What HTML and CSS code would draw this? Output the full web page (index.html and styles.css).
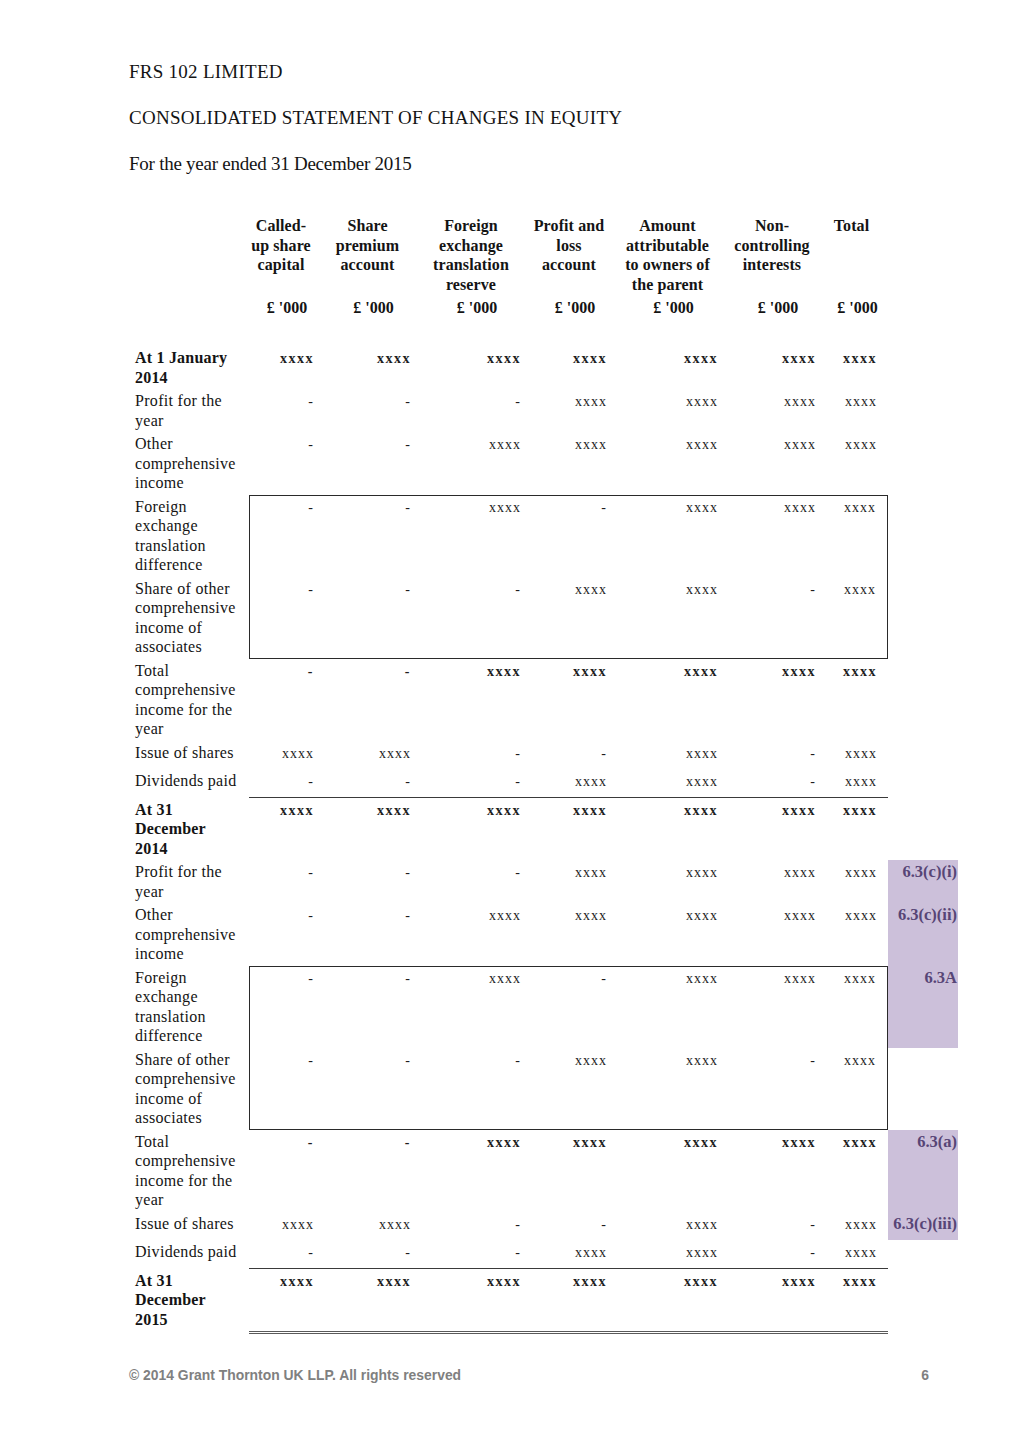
FILE: index.html
```html
<!DOCTYPE html>
<html lang="en">
<head>
<meta charset="utf-8">
<title>Consolidated statement of changes in equity</title>
<link rel="stylesheet" href="styles.css">
</head>
<body>
<div class="page">
  <div class="title t-caps">FRS 102 LIMITED</div>
  <div class="title t-caps">CONSOLIDATED STATEMENT OF CHANGES IN EQUITY</div>
  <div class="title t-mixed">For the year ended 31 December 2015</div>

  <table class="soce">
    <colgroup>
      <col class="c-lbl"><col class="c1"><col class="c2"><col class="c3"><col class="c4"><col class="c5"><col class="c6"><col class="c7"><col class="c-note">
    </colgroup>
    <thead>
      <tr class="hd">
        <th></th>
        <th>Called-up share capital</th>
        <th>Share premium account</th>
        <th>Foreign exchange translation reserve</th>
        <th>Profit and loss account</th>
        <th>Amount attributable to owners of the parent</th>
        <th>Non-controlling interests</th>
        <th>Total</th>
        <th></th>
      </tr>
      <tr class="cur">
        <th></th>
        <th>£ '000</th><th>£ '000</th><th>£ '000</th><th>£ '000</th><th>£ '000</th><th>£ '000</th><th>£ '000</th>
        <th></th>
      </tr>
    </thead>
    <tbody>
      <tr class="strong">
        <td class="lbl">At 1 January 2014</td>
        <td class="n">xxxx</td><td class="n">xxxx</td><td class="n">xxxx</td><td class="n">xxxx</td><td class="n">xxxx</td><td class="n">xxxx</td><td class="n">xxxx</td>
        <td class="note"></td>
      </tr>
      <tr>
        <td class="lbl">Profit for the year</td>
        <td class="n">-</td><td class="n">-</td><td class="n">-</td><td class="n">xxxx</td><td class="n">xxxx</td><td class="n">xxxx</td><td class="n">xxxx</td>
        <td class="note"></td>
      </tr>
      <tr>
        <td class="lbl">Other comprehensive income</td>
        <td class="n">-</td><td class="n">-</td><td class="n">xxxx</td><td class="n">xxxx</td><td class="n">xxxx</td><td class="n">xxxx</td><td class="n">xxxx</td>
        <td class="note"></td>
      </tr>
      <tr class="box-top">
        <td class="lbl">Foreign exchange translation difference</td>
        <td class="n bl">-</td><td class="n">-</td><td class="n">xxxx</td><td class="n">-</td><td class="n">xxxx</td><td class="n">xxxx</td><td class="n br">xxxx</td>
        <td class="note"></td>
      </tr>
      <tr class="box-bottom">
        <td class="lbl">Share of other comprehensive income of associates</td>
        <td class="n bl">-</td><td class="n">-</td><td class="n">-</td><td class="n">xxxx</td><td class="n">xxxx</td><td class="n">-</td><td class="n br">xxxx</td>
        <td class="note"></td>
      </tr>
      <tr class="totals">
        <td class="lbl">Total comprehensive income for the year</td>
        <td class="n">-</td><td class="n">-</td><td class="n">xxxx</td><td class="n">xxxx</td><td class="n">xxxx</td><td class="n">xxxx</td><td class="n">xxxx</td>
        <td class="note"></td>
      </tr>
      <tr class="single">
        <td class="lbl">Issue of shares</td>
        <td class="n">xxxx</td><td class="n">xxxx</td><td class="n">-</td><td class="n">-</td><td class="n">xxxx</td><td class="n">-</td><td class="n">xxxx</td>
        <td class="note"></td>
      </tr>
      <tr class="single rule">
        <td class="lbl">Dividends paid</td>
        <td class="n">-</td><td class="n">-</td><td class="n">-</td><td class="n">xxxx</td><td class="n">xxxx</td><td class="n">-</td><td class="n">xxxx</td>
        <td class="note"></td>
      </tr>
      <tr class="strong">
        <td class="lbl">At 31 December 2014</td>
        <td class="n">xxxx</td><td class="n">xxxx</td><td class="n">xxxx</td><td class="n">xxxx</td><td class="n">xxxx</td><td class="n">xxxx</td><td class="n">xxxx</td>
        <td class="note"></td>
      </tr>

      <tr>
        <td class="lbl">Profit for the year</td>
        <td class="n">-</td><td class="n">-</td><td class="n">-</td><td class="n">xxxx</td><td class="n">xxxx</td><td class="n">xxxx</td><td class="n">xxxx</td>
        <td class="note ref">6.3(c)(i)</td>
      </tr>
      <tr>
        <td class="lbl">Other comprehensive income</td>
        <td class="n">-</td><td class="n">-</td><td class="n">xxxx</td><td class="n">xxxx</td><td class="n">xxxx</td><td class="n">xxxx</td><td class="n">xxxx</td>
        <td class="note ref">6.3(c)(ii)</td>
      </tr>
      <tr class="box-top">
        <td class="lbl">Foreign exchange translation difference</td>
        <td class="n bl">-</td><td class="n">-</td><td class="n">xxxx</td><td class="n">-</td><td class="n">xxxx</td><td class="n">xxxx</td><td class="n br">xxxx</td>
        <td class="note ref">6.3A</td>
      </tr>
      <tr class="box-bottom">
        <td class="lbl">Share of other comprehensive income of associates</td>
        <td class="n bl">-</td><td class="n">-</td><td class="n">-</td><td class="n">xxxx</td><td class="n">xxxx</td><td class="n">-</td><td class="n br">xxxx</td>
        <td class="note"></td>
      </tr>
      <tr class="totals">
        <td class="lbl">Total comprehensive income for the year</td>
        <td class="n">-</td><td class="n">-</td><td class="n">xxxx</td><td class="n">xxxx</td><td class="n">xxxx</td><td class="n">xxxx</td><td class="n">xxxx</td>
        <td class="note ref">6.3(a)</td>
      </tr>
      <tr class="single">
        <td class="lbl">Issue of shares</td>
        <td class="n">xxxx</td><td class="n">xxxx</td><td class="n">-</td><td class="n">-</td><td class="n">xxxx</td><td class="n">-</td><td class="n">xxxx</td>
        <td class="note ref">6.3(c)(iii)</td>
      </tr>
      <tr class="single rule">
        <td class="lbl">Dividends paid</td>
        <td class="n">-</td><td class="n">-</td><td class="n">-</td><td class="n">xxxx</td><td class="n">xxxx</td><td class="n">-</td><td class="n">xxxx</td>
        <td class="note"></td>
      </tr>
      <tr class="strong final">
        <td class="lbl">At 31 December 2015</td>
        <td class="n">xxxx</td><td class="n">xxxx</td><td class="n">xxxx</td><td class="n">xxxx</td><td class="n">xxxx</td><td class="n">xxxx</td><td class="n">xxxx</td>
        <td class="note"></td>
      </tr>
    </tbody>
  </table>

  <footer class="foot">
    <span>© 2014 Grant Thornton UK LLP. All rights reserved</span>
    <span>6</span>
  </footer>
</div>
</body>
</html>
```

FILE: styles.css
```css
html, body {
  margin: 0;
  padding: 0;
  background: #ffffff;
}

body {
  font-family: "Liberation Serif", "Times New Roman", serif;
  color: #141414;
}

.page {
  width: 1024px;
  box-sizing: border-box;
  padding: 49px 0 0 129px;
}

.title {
  font-size: 19px;
  line-height: 46px;
  height: 46px;
  white-space: nowrap;
}

.t-caps { letter-spacing: 0.26px; }
.t-mixed { letter-spacing: -0.25px; }

.soce {
  margin-top: 29px;
  margin-left: 1px;
  border-collapse: separate;
  border-spacing: 0;
  table-layout: fixed;
  width: 828px;
}

.c-lbl { width: 119px; }
.c1 { width: 76px; }
.c2 { width: 97px; }
.c3 { width: 110px; }
.c4 { width: 86px; }
.c5 { width: 111px; }
.c6 { width: 98px; }
.c7 { width: 61px; }
.c-note { width: 70px; }

/* header */
.hd th {
  font-size: 16px;
  line-height: 19.5px;
  font-weight: bold;
  text-align: center;
  vertical-align: top;
  padding: 0 12px 0 0;
  letter-spacing: 0.1px;
}

.cur th {
  font-size: 16px;
  line-height: 19.5px;
  font-weight: bold;
  text-align: center;
  vertical-align: top;
  padding: 4px 0 28.5px 0;
  white-space: nowrap;
}

/* body cells */
.soce td {
  vertical-align: baseline;
  padding: 2px 0 2px 0;
  line-height: 19.5px;
}

.lbl {
  font-size: 16px;
  letter-spacing: 0.3px;
  padding-left: 5px !important;
  padding-right: 8px !important;
}

.n {
  font-size: 14px;
  letter-spacing: 1px;
  text-align: right;
  padding-right: 11px !important;
  color: #1e1e1e;
}

.strong .lbl {
  font-weight: bold;
  letter-spacing: 0.2px;
}

.strong .n,
.totals .n {
  font-weight: bold;
  letter-spacing: 1.5px;
}

.single td {
  padding-bottom: 5.5px;
}

.box-top .n { border-top: 1px solid #2a2a2a; }
.box-bottom .n { border-bottom: 1px solid #2a2a2a; }
.bl { border-left: 1px solid #2a2a2a; }
.br { border-right: 1px solid #2a2a2a; }

.rule .n { border-bottom: 1px solid #3a3a3a; }

.final td { padding-bottom: 4.5px; }
.final .n { border-bottom: 3px double #5a5a5a; }

/* reference notes */
.note {
  text-align: right;
  padding-right: 1px !important;
  font-size: 16.5px;
  font-weight: bold;
  color: #574576;
  white-space: nowrap;
}

.note.ref {
  background: #ccc0da;
}

/* footer */
.foot {
  display: flex;
  justify-content: space-between;
  width: 800px;
  margin-top: 33px;
  font-family: "Liberation Sans", Arial, sans-serif;
  font-weight: bold;
  font-size: 13.9px;
  line-height: 16px;
  color: #808080;
}
```
